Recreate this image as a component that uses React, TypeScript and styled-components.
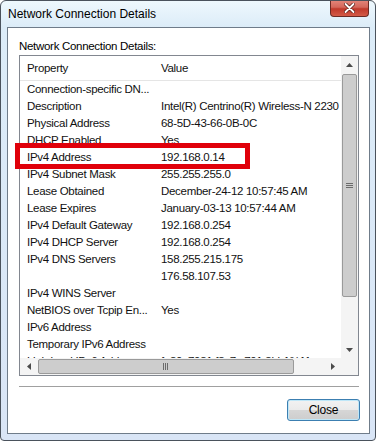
import styled, { createGlobalStyle } from 'styled-components';

const GlobalStyle = createGlobalStyle`
  html, body {
    margin: 0;
    padding: 0;
    background: #ffffff;
  }
  body {
    font-family: "Liberation Sans", Arial, sans-serif;
    font-size: 12px;
    color: #000;
  }
`;

interface Row {
  name: string;
  value: string;
}

const rows: Row[] = [
  { name: 'Connection-specific DN...', value: '' },
  { name: 'Description', value: 'Intel(R) Centrino(R) Wireless-N 2230' },
  { name: 'Physical Address', value: '68-5D-43-66-0B-0C' },
  { name: 'DHCP Enabled', value: 'Yes' },
  { name: 'IPv4 Address', value: '192.168.0.14' },
  { name: 'IPv4 Subnet Mask', value: '255.255.255.0' },
  { name: 'Lease Obtained', value: 'December-24-12 10:57:45 AM' },
  { name: 'Lease Expires', value: 'January-03-13 10:57:44 AM' },
  { name: 'IPv4 Default Gateway', value: '192.168.0.254' },
  { name: 'IPv4 DHCP Server', value: '192.168.0.254' },
  { name: 'IPv4 DNS Servers', value: '158.255.215.175' },
  { name: '', value: '176.58.107.53' },
  { name: 'IPv4 WINS Server', value: '' },
  { name: 'NetBIOS over Tcpip En...', value: 'Yes' },
  { name: 'IPv6 Address', value: '' },
  { name: 'Temporary IPv6 Address', value: '' },
  { name: 'Link-local IPv6 Address', value: 'fe80::7981:f8c7:c791:3bb1%11' },
];

// Window frame.
const Window = styled.div`
  width: 376px;
  height: 441px;
  box-sizing: border-box;
  border: 1px solid #4a525c;
  border-radius: 6px 6px 4px 4px;
  background: linear-gradient(180deg, #eef8fd 0px, #dcecf8 26px, #d9e5f6 100%);
  display: flex;
  flex-direction: column;
  overflow: hidden;
`;

const TitleBar = styled.div`
  position: relative;
  height: 26px;
  flex: none;
  display: flex;
  align-items: center;
  padding-left: 7px;
  font-size: 12px;
  color: #000;
`;

const CaptionClose = styled.div`
  position: absolute;
  top: -1px;
  right: 6px;
  width: 39px;
  height: 17px;
  box-sizing: border-box;
  border: 1px solid #6b2a24;
  border-top: none;
  border-radius: 0 0 4px 4px;
  background: linear-gradient(180deg, #e4877c 0%, #d4675b 45%, #c0392b 55%, #d35a47 100%);
  display: flex;
  align-items: center;
  justify-content: center;
`;

const Client = styled.div`
  flex: 1;
  margin: 0 5px 6px 6px;
  border: 1px solid #6f7c8a;
  background: #ffffff;
  padding: 10px 10px 0 11px;
  display: flex;
  flex-direction: column;
  font-size: 11.5px;
  letter-spacing: -0.3px;
`;

const GroupLabel = styled.div`
  height: 16px;
  line-height: 16px;
  margin-bottom: 1px;
`;

// List view.
const List = styled.div`
  position: relative;
  height: 321px;
  box-sizing: border-box;
  border: 1px solid #828790;
  display: grid;
  grid-template-columns: 1fr 17px;
  grid-template-rows: 1fr 17px;
`;

const Viewport = styled.div`
  overflow: hidden;
`;

const ListRow = styled.div<{ $header?: boolean }>`
  display: grid;
  grid-template-columns: 134px 1fr;
  height: ${(p) => (p.$header ? '24px' : '17px')};
  line-height: ${(p) => (p.$header ? '24px' : '17px')};
  border-bottom: ${(p) => (p.$header ? '1px solid #e5e5e5' : 'none')};
  white-space: nowrap;
  color: #111;
`;

const Cell = styled.div`
  padding-left: 7px;
`;

const Highlight = styled.div`
  position: absolute;
  left: -5px;
  top: 87px;
  width: 235px;
  height: 26px;
  box-sizing: border-box;
  border: 5px solid #e0000a;
  pointer-events: none;
`;

// Scroll bars.
const ScrollBar = styled.div<{ $vertical?: boolean }>`
  display: flex;
  flex-direction: ${(p) => (p.$vertical ? 'column' : 'row')};
  background: #f4f4f4;
`;

const ArrowButton = styled.div`
  flex: none;
  width: 17px;
  height: 17px;
  display: flex;
  align-items: center;
  justify-content: center;
`;

const Thumb = styled.div<{ $vertical?: boolean }>`
  flex: none;
  box-sizing: border-box;
  ${(p) =>
    p.$vertical
      ? 'width: 15px; height: 223px; margin: 1px 0 0 1px;'
      : 'height: 15px; width: 256px; margin: 1px 0 0 1px;'}
  border: 1px solid #9a9a9a;
  border-radius: 2px;
  background: #cdcdcd;
  display: flex;
  align-items: center;
  justify-content: center;
`;

const Track = styled.div`
  flex: 1;
`;

const Corner = styled.div`
  background: #f4f4f4;
`;

const Separator = styled.div`
  margin-top: 10px;
  height: 1px;
  border-top: 1px solid #a0a0a0;
  border-bottom: 1px solid #ffffff;
`;

const Footer = styled.div`
  display: flex;
  justify-content: flex-end;
  margin-top: 10px;
`;

const Button = styled.button`
  width: 73px;
  height: 22px;
  box-sizing: border-box;
  border: 1px solid #3c7fb1;
  border-radius: 3px;
  box-shadow: inset 0 0 0 1px #bfe7f8;
  background: linear-gradient(180deg, #f2f2f2 0%, #ebebeb 48%, #d6d6d6 52%, #cdcdcd 100%);
  font-family: "Liberation Sans", Arial, sans-serif;
  font-size: 12px;
  letter-spacing: -0.2px;
  color: #000;
  padding: 0;
  margin-right: -1px;
`;

function Arrow({ dir }: { dir: 'up' | 'down' | 'left' | 'right' }) {
  const points = {
    up: '0,4 3.5,0 7,4',
    down: '0,0 3.5,4 7,0',
    left: '4,0 0,3.5 4,7',
    right: '0,0 4,3.5 0,7',
  }[dir];
  const horiz = dir === 'up' || dir === 'down';
  return (
    <svg width={horiz ? 7 : 4} height={horiz ? 4 : 7} viewBox={horiz ? '0 0 7 4' : '0 0 4 7'}>
      <polygon points={points} fill="#4b4b4b" />
    </svg>
  );
}

function Grip({ vertical }: { vertical?: boolean }) {
  return vertical ? (
    <svg width="7" height="6" viewBox="0 0 7 6">
      <path d="M0 0.5h7M0 2.5h7M0 4.5h7" stroke="#6b6b6b" strokeWidth="1" />
    </svg>
  ) : (
    <svg width="6" height="7" viewBox="0 0 6 7">
      <path d="M0.5 0v7M2.5 0v7M4.5 0v7" stroke="#6b6b6b" strokeWidth="1" />
    </svg>
  );
}

export default function App() {
  return (
    <>
      <GlobalStyle />
      <Window>
        <TitleBar>
          Network Connection Details
          <CaptionClose>
            <svg width="11" height="10" viewBox="0 0 11 10">
              <path d="M1.5 1l8 8M9.5 1l-8 8" stroke="#5a1c16" strokeWidth="3.4" strokeLinecap="round" />
              <path d="M1.5 1l8 8M9.5 1l-8 8" stroke="#ffffff" strokeWidth="1.8" strokeLinecap="round" />
            </svg>
          </CaptionClose>
        </TitleBar>
        <Client>
          <GroupLabel>Network Connection Details:</GroupLabel>
          <List>
            <Viewport>
              <ListRow $header>
                <Cell>Property</Cell>
                <Cell>Value</Cell>
              </ListRow>
              {rows.map((r, i) => (
                <ListRow key={i}>
                  <Cell>{r.name}</Cell>
                  <Cell>{r.value}</Cell>
                </ListRow>
              ))}
            </Viewport>
            <ScrollBar $vertical>
              <ArrowButton>
                <Arrow dir="up" />
              </ArrowButton>
              <Thumb $vertical>
                <Grip vertical />
              </Thumb>
              <Track />
              <ArrowButton>
                <Arrow dir="down" />
              </ArrowButton>
            </ScrollBar>
            <ScrollBar>
              <ArrowButton>
                <Arrow dir="left" />
              </ArrowButton>
              <Thumb>
                <Grip />
              </Thumb>
              <Track />
              <ArrowButton>
                <Arrow dir="right" />
              </ArrowButton>
            </ScrollBar>
            <Corner />
            <Highlight />
          </List>
          <Separator />
          <Footer>
            <Button>Close</Button>
          </Footer>
        </Client>
      </Window>
    </>
  );
}
